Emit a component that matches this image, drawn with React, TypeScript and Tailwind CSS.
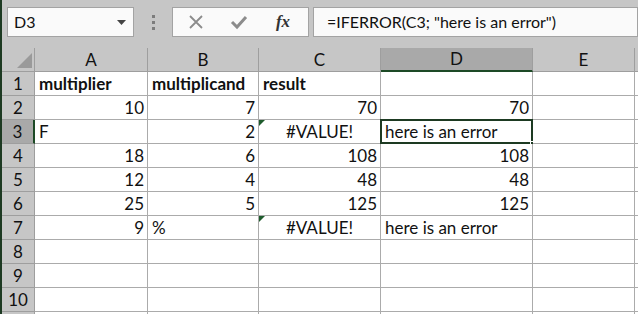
import React from 'react';

const font = { fontFamily: 'Lato, "Open Sans", sans-serif' };

type Cell = { v?: string; align?: 'l' | 'r' | 'c'; bold?: boolean; err?: boolean; sel?: boolean };

const rows: Cell[][] = [
  [{ v: 'multiplier', bold: true }, { v: 'multiplicand', bold: true }, { v: 'result', bold: true }, {}, {}],
  [{ v: '10', align: 'r' }, { v: '7', align: 'r' }, { v: '70', align: 'r' }, { v: '70', align: 'r' }, {}],
  [{ v: 'F' }, { v: '2', align: 'r' }, { v: '#VALUE!', align: 'c', err: true }, { v: 'here is an error', sel: true }, {}],
  [{ v: '18', align: 'r' }, { v: '6', align: 'r' }, { v: '108', align: 'r' }, { v: '108', align: 'r' }, {}],
  [{ v: '12', align: 'r' }, { v: '4', align: 'r' }, { v: '48', align: 'r' }, { v: '48', align: 'r' }, {}],
  [{ v: '25', align: 'r' }, { v: '5', align: 'r' }, { v: '125', align: 'r' }, { v: '125', align: 'r' }, {}],
  [{ v: '9', align: 'r' }, { v: '%' }, { v: '#VALUE!', align: 'c', err: true }, { v: 'here is an error' }, {}],
  [{}, {}, {}, {}, {}],
  [{}, {}, {}, {}, {}],
  [{}, {}, {}, {}, {}],
  [{}, {}, {}, {}, {}],
];

const cols = ['A', 'B', 'C', 'D', 'E'];

function alignClass(a?: 'l' | 'r' | 'c') {
  if (a === 'r') return 'justify-end pr-[3px] ';
  if (a === 'c') return 'justify-center ';
  return 'justify-start pl-[4px] ';
}

function Toolbar() {
  return (
    <div className="flex h-[48px] shrink-0 items-start pt-[7px] pl-[5px]">
      <div className="flex h-[30px] w-[127px] items-center justify-between border border-[#a3a3a3] bg-[#fafafa] pl-[6px] pr-[7px]">
        <span className="text-[16px] text-[#111]">D3</span>
        <svg width="9" height="5" viewBox="0 0 9 5">
          <path d="M0 0 H9 L4.5 5 Z" fill="#444" />
        </svg>
      </div>
      <div className="flex h-[30px] w-[38px] flex-col items-center justify-center gap-[3px]">
        <div className="h-[3px] w-[3px] bg-[#7c7c7c]" />
        <div className="h-[3px] w-[3px] bg-[#7c7c7c]" />
        <div className="h-[3px] w-[3px] bg-[#7c7c7c]" />
      </div>
      <div className="flex h-[30px] w-[137px] items-center border border-[#a3a3a3] bg-[#fafafa]">
        <div className="flex w-[44px] justify-center pl-[2px]">
          <svg width="16" height="16" viewBox="0 0 16 16">
            <path d="M2 2 L14 14 M14 2 L2 14" stroke="#8c8c8c" strokeWidth="1.8" />
          </svg>
        </div>
        <div className="flex w-[44px] justify-center">
          <svg width="18" height="16" viewBox="0 0 18 16">
            <path d="M2 8 L7 13 L16 3" stroke="#8c8c8c" strokeWidth="3" fill="none" />
          </svg>
        </div>
        <div className="flex w-[44px] justify-center">
          <span
            className="text-[17px] font-bold italic text-[#333]"
            style={{ fontFamily: '"Liberation Serif", serif' }}
          >
            fx
          </span>
        </div>
      </div>
      <div className="ml-[4px] flex h-[30px] flex-1 items-center border border-[#a3a3a3] bg-[#fafafa] pl-[13px]">
        <span className="text-[16px] text-[#111]">=IFERROR(C3; "here is an error")</span>
      </div>
    </div>
  );
}

export default function App() {
  return (
    <div className="flex h-[314px] w-[638px] overflow-hidden bg-[#c6c6c6]" style={font}>
      <div className="w-[2px] shrink-0 bg-[#1d3a22]" />
      <div className="flex flex-1 flex-col">
        <Toolbar />
        <div className="grid shrink-0 grid-cols-[33px_113px_111px_122px_152px_102px_1fr] auto-rows-[24px]">
          <div className="relative border-r border-b border-[#9e9e9e] bg-[#c6c6c6]">
            <svg className="absolute right-[2px] bottom-[3px]" width="15" height="15" viewBox="0 0 15 15">
              <path d="M15 0 V15 H0 Z" fill="#9a9a9a" />
            </svg>
          </div>
          {cols.map((c) => (
            <div
              key={c}
              className={
                c === 'D'
                  ? 'flex items-center justify-center border-r border-b-2 border-r-[#9e9e9e] border-b-[#1d4a26] bg-[#a9a9a9] text-[17px] text-[#111]'
                  : 'flex items-center justify-center border-r border-b border-[#9e9e9e] bg-[#c6c6c6] text-[17px] text-[#111]'
              }
            >
              {c}
            </div>
          ))}
          <div className="border-b border-[#9e9e9e] bg-[#c6c6c6]" />
          {rows.map((r, i) => (
            <React.Fragment key={i}>
              <div
                className={
                  i === 2
                    ? 'flex items-center justify-center border-r-2 border-b border-r-[#1d4a26] border-b-[#9e9e9e] bg-[#a9a9a9] text-[17px] text-[#111]'
                    : 'flex items-center justify-center border-r border-b border-[#9e9e9e] bg-[#c6c6c6] text-[17px] text-[#111]'
                }
              >
                {i < 10 ? i + 1 : ''}
              </div>
              {r.map((cell, j) => (
                <div
                  key={j}
                  className={
                    alignClass(cell.align) +
                    (cell.bold ? 'font-bold ' : '') +
                    'relative flex items-center whitespace-nowrap border-r border-b border-[#ababab] bg-white text-[17px] text-[#111]'
                  }
                >
                  {cell.err && (
                    <svg className="absolute top-0 left-0" width="6" height="6" viewBox="0 0 6 6">
                      <path d="M0 0 H6 L0 6 Z" fill="#1e5b2c" />
                    </svg>
                  )}
                  {cell.v}
                  {cell.sel && (
                    <>
                      <div className="absolute -top-[1px] -left-[1px] -right-[1px] -bottom-[1px] border-2 border-[#1d3a22]" />
                      <div className="absolute -right-[4px] -bottom-[4px] h-[6px] w-[6px] border border-white bg-[#1d3a22]" />
                    </>
                  )}
                </div>
              ))}
              <div className="border-b border-[#ababab] bg-white" />
            </React.Fragment>
          ))}
        </div>
      </div>
    </div>
  );
}
